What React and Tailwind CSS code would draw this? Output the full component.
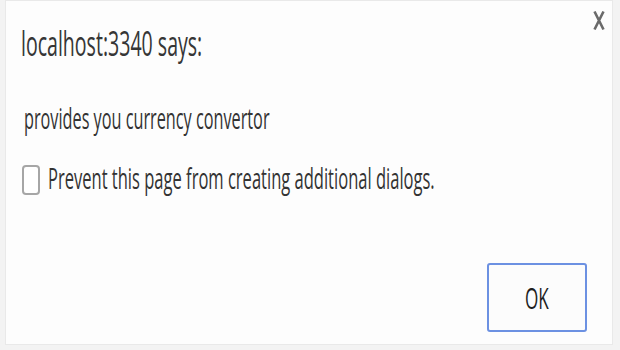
import React from "react";

const font = { fontFamily: '"Open Sans", "Noto Sans", sans-serif' };

const AlertDialog = () => {
  return (
    <div className="w-[620px] h-[350px] bg-[#f3f3f3] overflow-hidden" style={font}>
      <div className="relative ml-[5px] w-[608px] h-[345px] bg-[#fdfdfd] border border-[#e9e9e9] flex flex-col">
        <button className="absolute top-[9px] right-[7px] w-[12px] h-[21px]" aria-label="Close">
          <svg viewBox="0 0 12 21" className="w-[12px] h-[21px]" fill="none" stroke="#6a6a6a" strokeWidth="2.6">
            <path d="M1.5 1.5 L10.5 19.5 M10.5 1.5 L1.5 19.5" />
          </svg>
        </button>

        <div className="pt-[25px] pl-[15px]">
          <div className="origin-left scale-x-[0.575] text-[34px] leading-none text-[#363636] whitespace-nowrap">
            localhost:3340 says:
          </div>
        </div>

        <div className="mt-[44px] pl-[18px]">
          <div className="origin-left scale-x-[0.57] text-[28.5px] leading-none text-[#333333] whitespace-nowrap">
            provides you currency convertor
          </div>
        </div>

        <label className="mt-[30px] pl-[16px] flex items-start gap-[8px]">
          <span className="mt-[2px] w-[18px] h-[30px] shrink-0 rounded-[4px] border-2 border-[#a6a6a6] bg-white" />
          <span className="block origin-left scale-x-[0.57] text-[29px] leading-none text-[#333333] whitespace-nowrap">
            Prevent this page from creating additional dialogs.
          </span>
        </label>

        <div className="mt-auto mb-[12px] pr-[25px] flex justify-end">
          <button className="w-[100px] h-[69px] rounded-[3px] border-2 border-[#6c91e2] bg-[#fcfcfc] flex items-center justify-center">
            <span className="block scale-x-[0.57] text-[30px] font-medium leading-none text-[#1f1f1f]">OK</span>
          </button>
        </div>
      </div>
    </div>
  );
};

export default function App() {
  return <AlertDialog />;
}
